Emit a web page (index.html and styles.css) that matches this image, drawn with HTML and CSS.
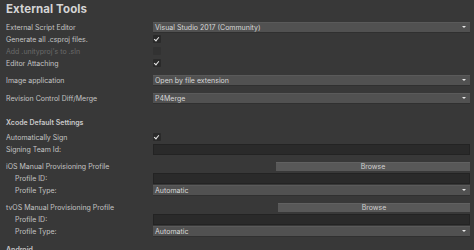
FILE: index.html
```html
<!DOCTYPE html>
<html>
<head>
<meta charset="utf-8">
<link rel="stylesheet" href="styles.css">
</head>
<body>
<div class="panel">
  <h1 class="title">External Tools</h1>
  <div class="rows">
    <div class="row"><span class="label">External Script Editor</span><div class="dropdown"><span>Visual Studio 2017 (Community)</span><i class="arrow"></i></div></div>
    <div class="row"><span class="label">Generate all .csproj files.</span><span class="check on"></span></div>
    <div class="row"><span class="label disabled">Add .unityproj's to .sln</span><span class="check off"></span></div>
    <div class="row"><span class="label">Editor Attaching</span><span class="check on"></span></div>
    <div class="row gap5"><span class="label">Image application</span><div class="dropdown"><span>Open by file extension</span><i class="arrow"></i></div></div>
    <div class="row gap6"><span class="label">Revision Control Diff/Merge</span><div class="dropdown"><span>P4Merge</span><i class="arrow"></i></div></div>
    <div class="row gap12"><span class="label header">Xcode Default Settings</span></div>
    <div class="row gap3"><span class="label">Automatically Sign</span><span class="check on"></span></div>
    <div class="row"><span class="label">Signing Team Id:</span><div class="field"></div></div>
    <div class="row gap5"><span class="label">iOS Manual Provisioning Profile</span><div class="browse-wrap"><button class="browse">Browse</button></div></div>
    <div class="row"><span class="label indent">Profile ID:</span><div class="field"></div></div>
    <div class="row"><span class="label indent">Profile Type:</span><div class="dropdown"><span>Automatic</span><i class="arrow"></i></div></div>
    <div class="row gap5"><span class="label">tvOS Manual Provisioning Profile</span><div class="browse-wrap tv"><button class="browse">Browse</button></div></div>
    <div class="row"><span class="label indent">Profile ID:</span><div class="field"></div></div>
    <div class="row"><span class="label indent">Profile Type:</span><div class="dropdown"><span>Automatic</span><i class="arrow"></i></div></div>
    <div class="row gap6"><span class="label header">Android</span></div>
  </div>
</div>
</body>
</html>
```
FILE: styles.css
```css
html, body {
  margin: 0;
  padding: 0;
  background: #383838;
  width: 474px;
  height: 250px;
  overflow: hidden;
}
.panel {
  padding: 2px 4px 0 6px;
  font-family: Inter, "Liberation Sans", sans-serif;
  color: #c4c4c4;
  font-size: 7px;
}
.title {
  margin: 0;
  height: 19px;
  font-size: 11.5px;
  font-weight: 700;
  color: #d4d4d4;
  line-height: 14px;
  letter-spacing: 0.1px;
}
.rows {
  display: flex;
  flex-direction: column;
}
.row {
  height: 12px;
  display: flex;
  align-items: center;
}
.gap3 { margin-top: 3px; }
.gap5 { margin-top: 5px; }
.gap6 { margin-top: 6px; }
.gap12 { margin-top: 12px; }
.label {
  width: 147px;
  flex: none;
  white-space: nowrap;
}
.label.disabled { color: #6a6a6a; }
.label.header { font-weight: 600; color: #c8c8c8; }
.label.indent { padding-left: 9px; box-sizing: border-box; }
.dropdown {
  flex: 1;
  height: 9px;
  background: #515151;
  border-top: 1px solid #5a5a5a;
  border-bottom: 1px solid #303030;
  display: flex;
  align-items: center;
  padding: 0 4px 0 2px;
  color: #d8d8d8;
}
.dropdown span { flex: 1; }
.arrow {
  width: 0;
  height: 0;
  border-left: 2px solid transparent;
  border-right: 2px solid transparent;
  border-top: 2px solid #e8e8e8;
}
.check {
  width: 8px;
  height: 8px;
  background: #2a2a2a;
  border-radius: 1px;
  position: relative;
}
.check.on::after {
  content: "";
  position: absolute;
  left: 2px;
  top: 1px;
  width: 2px;
  height: 4px;
  border-right: 1.3px solid #e8e8e8;
  border-bottom: 1.3px solid #e8e8e8;
  transform: rotate(40deg);
}
.check.off { background: #323232; }
.field {
  flex: 1;
  height: 9px;
  background: #2a2a2a;
  border: 1px solid #232323;
}
.browse-wrap {
  flex: 1;
  display: flex;
  padding-left: 123px;
}
.browse-wrap.tv { padding-left: 125px; }
.browse {
  flex: 1;
  height: 9px;
  margin: 0;
  padding: 0;
  border: none;
  border-top: 1px solid #616161;
  background: #585858;
  color: #d0d0d0;
  font-family: inherit;
  font-size: 7px;
  line-height: 8px;
}
```
